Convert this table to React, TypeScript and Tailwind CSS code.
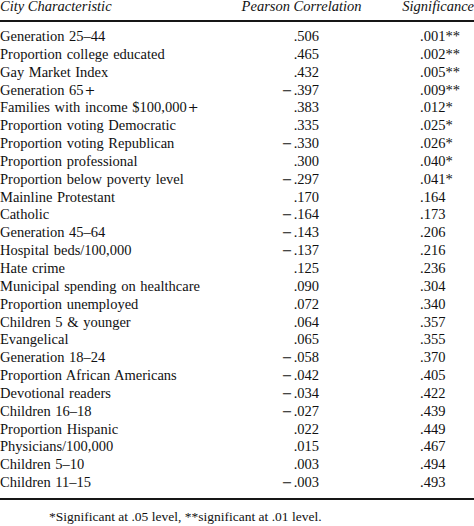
import React from "react";

type Row = { label: string; r: string; sig: string };

const rows: Row[] = [
  { label: "Generation 25–44", r: ".506", sig: ".001**" },
  { label: "Proportion college educated", r: ".465", sig: ".002**" },
  { label: "Gay Market Index", r: ".432", sig: ".005**" },
  { label: "Generation 65+", r: "−.397", sig: ".009**" },
  { label: "Families with income $100,000+", r: ".383", sig: ".012*" },
  { label: "Proportion voting Democratic", r: ".335", sig: ".025*" },
  { label: "Proportion voting Republican", r: "−.330", sig: ".026*" },
  { label: "Proportion professional", r: ".300", sig: ".040*" },
  { label: "Proportion below poverty level", r: "−.297", sig: ".041*" },
  { label: "Mainline Protestant", r: ".170", sig: ".164" },
  { label: "Catholic", r: "−.164", sig: ".173" },
  { label: "Generation 45–64", r: "−.143", sig: ".206" },
  { label: "Hospital beds/100,000", r: "−.137", sig: ".216" },
  { label: "Hate crime", r: ".125", sig: ".236" },
  { label: "Municipal spending on healthcare", r: ".090", sig: ".304" },
  { label: "Proportion unemployed", r: ".072", sig: ".340" },
  { label: "Children 5 & younger", r: ".064", sig: ".357" },
  { label: "Evangelical", r: ".065", sig: ".355" },
  { label: "Generation 18–24", r: "−.058", sig: ".370" },
  { label: "Proportion African Americans", r: "−.042", sig: ".405" },
  { label: "Devotional readers", r: "−.034", sig: ".422" },
  { label: "Children 16–18", r: "−.027", sig: ".439" },
  { label: "Proportion Hispanic", r: ".022", sig: ".449" },
  { label: "Physicians/100,000", r: ".015", sig: ".467" },
  { label: "Children 5–10", r: ".003", sig: ".494" },
  { label: "Children 11–15", r: "−.003", sig: ".493" },
];

// the source typesets + and − wider than the text face
const Label = ({ text }: { text: string }) => {
  if (!text.endsWith("+")) return <>{text}</>;
  return (
    <>
      {text.slice(0, -1)}
      <span className="ml-[1px] font-['DejaVu_Serif',serif] text-[13px]">+</span>
    </>
  );
};

const Value = ({ text }: { text: string }) => {
  if (!text.startsWith("−")) return <>{text}</>;
  return (
    <>
      <span className="mr-[1px] font-['DejaVu_Serif',serif] text-[13px]">−</span>
      {text.slice(1)}
    </>
  );
};

export default function App() {
  return (
    <div className="h-[526px] w-[474px] overflow-hidden bg-white font-['Liberation_Serif','Times_New_Roman',serif] text-[14.5px] text-[#111]">
      {/* Header */}
      <div className="flex h-[12px] items-center whitespace-nowrap italic leading-[12px]">
        <div className="w-[242px]">City Characteristic</div>
        <div className="w-[161px]">Pearson Correlation</div>
        <div>Significance</div>
      </div>
      <div className="mt-[8px] h-[2px] bg-[#161616]" />

      {/* Body */}
      <div className="pt-[6px]">
        {rows.map((row) => (
          <div
            key={row.label}
            className="flex h-[17.85px] whitespace-nowrap leading-[17.85px] [word-spacing:1px]"
          >
            <div className="w-[250px]">
              <Label text={row.label} />
            </div>
            <div className="w-[69px] text-right">
              <Value text={row.r} />
            </div>
            <div className="pl-[101px]">{row.sig}</div>
          </div>
        ))}
      </div>
      <div className="mt-[6px] h-[2px] bg-[#161616]" />

      {/* Footnote */}
      <div className="mt-[9px] whitespace-nowrap pl-[49px] text-[13.5px] leading-[16px]">
        *Significant at .05 level, **significant at .01 level.
      </div>
    </div>
  );
}
